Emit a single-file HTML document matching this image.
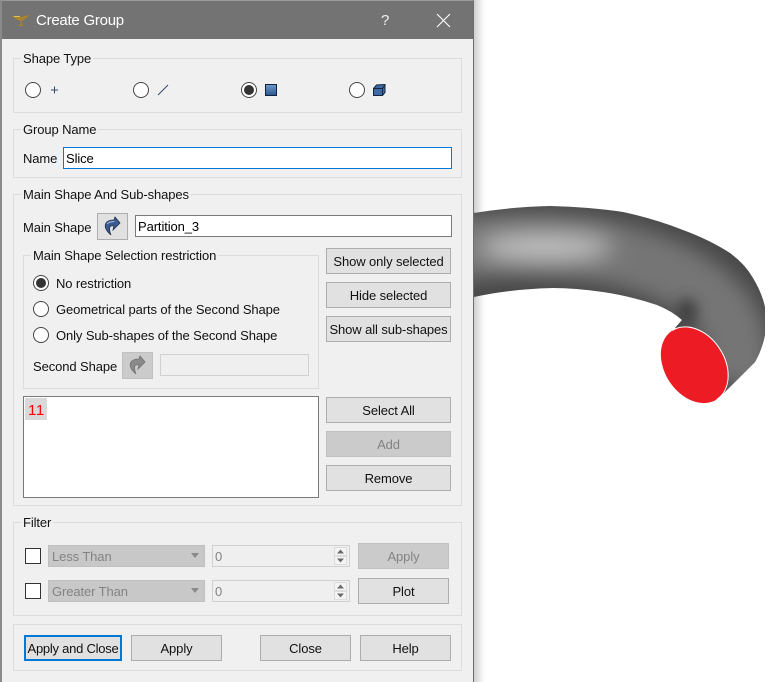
<!DOCTYPE html>
<html><head><meta charset="utf-8"><style>
html,body{margin:0;padding:0;width:772px;height:682px;overflow:hidden;background:#fff}
body{position:relative;font:13px/16px "Liberation Sans",sans-serif;color:#000}
div,span,svg{position:absolute;box-sizing:border-box}
.t{white-space:nowrap;letter-spacing:-.1px;color:#111}
.g{border:1px solid #dcdcdc}
.l{background:#f0f0f0;padding:0 2px;white-space:nowrap;letter-spacing:-.1px;color:#111}
.r{width:16px;height:16px;border-radius:50%;border:1.4px solid #444;background:#fff}
.r.c:after{content:"";position:absolute;left:1.6px;top:1.6px;width:10px;height:10px;border-radius:50%;background:#333}
.b{background:#e1e1e1;border:1px solid #adadad;text-align:center;line-height:26px;white-space:nowrap;letter-spacing:-.1px;color:#111}
.d{background:#cbcbcb;border-color:#c0c0c0;color:#838383}
.i{background:#fff;border:1px solid #7a7a7a;line-height:22px;padding-left:2px;letter-spacing:-.1px;white-space:nowrap}
.x{background:#efefef;border:1px solid #d0d0d0;line-height:22px;padding-left:2px;color:#838383}
.k{width:16px;height:16px;border:1px solid #333;background:#fff}
.cb{background:#c8c8c8;border:1px solid #c0c0c0;line-height:22px;padding-left:3px;color:#838383;letter-spacing:-.1px}
</style></head><body>

<div style="left:474px;top:0;width:12px;height:682px;background:linear-gradient(90deg,#cfcfcf,#f6f6f6 70%,#fff)"></div>

<svg style="left:474px;top:190px" width="298" height="230" viewBox="474 190 298 230">
<defs>
<clipPath id="tc"><path d="M474 213 Q510 207 550 206 Q590 207 623 212 Q655 219 683 230 Q710 240 730 253 Q745 264 753 278 Q762 293 765 307 L765 335 Q762 350 755 362 L723 394 L675 328 L682 320 Q672 311 657 305 Q630 296 603 292 Q575 288 553 288 Q510 289 474 297 Z"/></clipPath>
<filter id="b1" filterUnits="userSpaceOnUse" x="400" y="150" width="450" height="320"><feGaussianBlur stdDeviation="10"/></filter>
<filter id="b2" filterUnits="userSpaceOnUse" x="400" y="170" width="320" height="160"><feGaussianBlur stdDeviation="12"/></filter>
<filter id="b3" filterUnits="userSpaceOnUse" x="640" y="260" width="100" height="100"><feGaussianBlur stdDeviation="7"/></filter>
</defs>
<g clip-path="url(#tc)">
<rect x="474" y="190" width="298" height="230" fill="#484848"/>
<path d="M450 250 Q550 238 620 255 Q690 272 722 310 Q745 340 735 385" fill="none" stroke="#757575" stroke-width="62" filter="url(#b1)"/>
<ellipse cx="545" cy="247" rx="68" ry="14" fill="#c4c4c4" filter="url(#b2)"/>
<ellipse cx="687" cy="312" rx="10" ry="14" fill="#3e3e3e" filter="url(#b3)"/>
</g>
<g transform="translate(694.500 365) rotate(57)">
<ellipse cx="0" cy="0" rx="41" ry="30" fill="#ed1c24"/>
<path d="M-41 0 A41 30 0 0 1 41 0" fill="none" stroke="#fff" stroke-width="1"/>
</g>
</svg>

<div style="left:0;top:0;width:474px;height:682px;background:#f0f0f0;border-left:2px solid #8a8a8a;border-right:1px solid #6e6e6e;border-top:1px solid #9a9a9a"></div>
<div style="left:2px;top:1px;width:471px;height:38px;background:#737373"></div>
<svg style="left:11px;top:13px" width="20" height="14" viewBox="0 0 20 14"><path d="M0 3 L7 3 Q10 5 13 3 L19 2 L14 6 Q11 8 10.500 8 L10.500 11 L13 13 L7 13 L9.500 11 L9.500 8 Q6 7 4 5 Z" fill="#a8842c"/><path d="M3 3.500h6" stroke="#e0c060" fill="none"/></svg>
<div class="t" style="left:36px;top:11px;font-size:15px;line-height:20px;color:#fff;letter-spacing:-.25px">Create Group</div>
<div class="t" style="left:381px;top:11px;font-size:15px;line-height:20px;color:#f2f2f2">?</div>
<svg style="left:436px;top:13px" width="15" height="15"><path d="M1 1 L14 14 M14 1 L1 14" stroke="#fff" stroke-width="1.1"/></svg>

<!-- Shape Type -->
<div class="g" style="left:13px;top:58px;width:449px;height:55px"></div>
<div class="l" style="left:21px;top:51px">Shape Type</div>
<div class="r" style="left:25px;top:82px"></div>
<div class="r" style="left:133px;top:82px"></div>
<div class="r c" style="left:241px;top:82px"></div>
<div class="r" style="left:349px;top:82px"></div>
<svg style="left:50px;top:84px" width="340" height="14" viewBox="50 84 340 14">
<path d="M51 90h7M54.500 86.500v7" stroke="#2f4b70" stroke-width="1" fill="none"/>
<path d="M158 95 L168 85" stroke="#2f4b70" stroke-width="1" fill="none"/>
<defs><linearGradient id="bl" x1="0" y1="0" x2="0" y2="1"><stop offset="0" stop-color="#6f9bd0"/><stop offset="1" stop-color="#2a5590"/></linearGradient></defs>
<rect x="265.500" y="84.500" width="11" height="11" fill="url(#bl)" stroke="#10223c"/>
<path d="M373.500 88.500 L376.500 85 L385 84.500 L385 92.500 L382.500 95.500 L373.500 95.500 Z" fill="#3d6aa5" stroke="#14263f"/>
<path d="M373.500 88.500 L382.500 88.500 L382.500 95.500 M382.500 88.500 L385 85" fill="none" stroke="#14263f"/>
</svg>

<!-- Group Name -->
<div class="g" style="left:13px;top:129px;width:449px;height:49px"></div>
<div class="l" style="left:21px;top:122px">Group Name</div>
<div class="t" style="left:23px;top:151px">Name</div>
<div class="i" style="left:63px;top:147px;width:389px;height:22px;border-color:#0078d7">Slice</div>

<!-- Main Shape -->
<div class="g" style="left:13px;top:194px;width:449px;height:312px"></div>
<div class="l" style="left:21px;top:187px">Main Shape And Sub-shapes</div>
<div class="t" style="left:23px;top:220px">Main Shape</div>
<div class="b" style="left:97px;top:213px;width:31px;height:27px"></div>
<svg style="left:103px;top:216px" width="20" height="21" viewBox="0 0 20 21"><path d="M8 19 Q1 13 2.500 8 Q4 4 11 4 L12 1 L17 7 L10 14 L11 10 Q7 9 6.500 12 Q6.500 16 8 19Z" fill="#3b5a90" stroke="#1c2c48" stroke-width=".8"/><path d="M4 8 Q6 5.500 11.500 5.500" stroke="#a8c0e0" fill="none"/></svg>
<div class="i" style="left:135px;top:215px;width:317px;height:22px">Partition_3</div>

<div class="g" style="left:23px;top:255px;width:296px;height:134px"></div>
<div class="l" style="left:31px;top:248px">Main Shape Selection restriction</div>
<div class="r c" style="left:33px;top:275px"></div>
<div class="t" style="left:56px;top:276px">No restriction</div>
<div class="r" style="left:33px;top:301px"></div>
<div class="t" style="left:56px;top:302px">Geometrical parts of the Second Shape</div>
<div class="r" style="left:33px;top:327px"></div>
<div class="t" style="left:56px;top:328px">Only Sub-shapes of the Second Shape</div>
<div class="t" style="left:33px;top:359px">Second Shape</div>
<div class="b d" style="left:122px;top:352px;width:31px;height:27px"></div>
<svg style="left:128px;top:355px" width="20" height="21" viewBox="0 0 20 21"><path d="M8 19 Q1 13 2.500 8 Q4 4 11 4 L12 1 L17 7 L10 14 L11 10 Q7 9 6.500 12 Q6.500 16 8 19Z" fill="#8a8a8a" stroke="#6e6e6e" stroke-width=".8"/></svg>
<div class="x" style="left:160px;top:354px;width:149px;height:22px"></div>

<div class="b" style="left:326px;top:248px;width:125px;height:26px">Show only selected</div>
<div class="b" style="left:326px;top:282px;width:125px;height:26px">Hide selected</div>
<div class="b" style="left:326px;top:316px;width:125px;height:26px">Show all sub-shapes</div>

<div style="left:23px;top:396px;width:296px;height:102px;background:#fff;border:1px solid #7a7a7a"></div>
<div style="left:25px;top:398px;width:22px;height:22px;background:#d9d9d9;color:#f00;font-size:15px;line-height:25px;padding-left:3px;letter-spacing:.6px">11</div>

<div class="b" style="left:326px;top:397px;width:125px;height:26px">Select All</div>
<div class="b d" style="left:326px;top:431px;width:125px;height:26px">Add</div>
<div class="b" style="left:326px;top:465px;width:125px;height:26px">Remove</div>

<!-- Filter -->
<div class="g" style="left:13px;top:522px;width:449px;height:94px"></div>
<div class="l" style="left:21px;top:515px">Filter</div>
<div class="k" style="left:25px;top:548px"></div>
<div class="k" style="left:25px;top:583px"></div>
<div class="cb" style="left:48px;top:545px;width:157px;height:22px">Less Than</div>
<div class="cb" style="left:48px;top:580px;width:157px;height:22px">Greater Than</div>
<svg style="left:190px;top:553px" width="10" height="6"><path d="M1 0h8l-4 5z" fill="#8a8a8a"/></svg>
<svg style="left:190px;top:588px" width="10" height="6"><path d="M1 0h8l-4 5z" fill="#8a8a8a"/></svg>
<div class="x" style="left:212px;top:545px;width:138px;height:22px">0</div>
<div class="x" style="left:212px;top:580px;width:138px;height:22px">0</div>
<svg style="left:334px;top:547px" width="14" height="18"><rect x=".5" y=".5" width="12" height="8" fill="#f4f4f4" stroke="#dcdcdc"/><rect x=".5" y="9.500" width="12" height="8" fill="#f4f4f4" stroke="#dcdcdc"/><path d="M3 6.500h7L6.500 2.500z" fill="#6a6a6a"/><path d="M3 11.500h7L6.500 15.500z" fill="#6a6a6a"/></svg>
<svg style="left:334px;top:582px" width="14" height="18"><rect x=".5" y=".5" width="12" height="8" fill="#f4f4f4" stroke="#dcdcdc"/><rect x=".5" y="9.500" width="12" height="8" fill="#f4f4f4" stroke="#dcdcdc"/><path d="M3 6.500h7L6.500 2.500z" fill="#6a6a6a"/><path d="M3 11.500h7L6.500 15.500z" fill="#6a6a6a"/></svg>
<div class="b d" style="left:358px;top:543px;width:91px;height:26px">Apply</div>
<div class="b" style="left:358px;top:578px;width:91px;height:26px">Plot</div>

<!-- Bottom -->
<div class="g" style="left:13px;top:624px;width:449px;height:47px"></div>
<div class="b" style="left:24px;top:635px;width:98px;height:26px;border:2px solid #0078d7;line-height:24px;letter-spacing:-.25px">Apply and Close</div>
<div class="b" style="left:131px;top:635px;width:91px;height:26px">Apply</div>
<div class="b" style="left:260px;top:635px;width:91px;height:26px">Close</div>
<div class="b" style="left:360px;top:635px;width:91px;height:26px">Help</div>
</body></html>
